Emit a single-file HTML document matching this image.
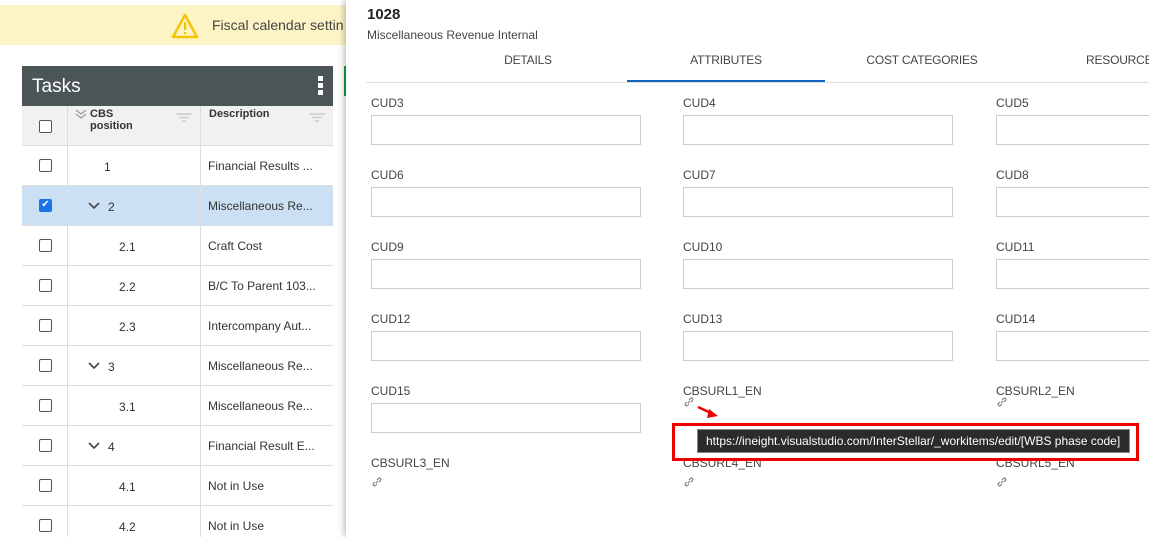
<!DOCTYPE html>
<html><head><meta charset="utf-8"><style>
*{box-sizing:border-box;margin:0;padding:0}
html,body{width:1149px;height:537px;overflow:hidden}
body{position:relative;background:#fff;font-family:"Liberation Sans",Roboto,sans-serif;color:#333}
.a{position:absolute}
.banner{left:0;top:5px;width:346px;height:40px;background:#fdf4c6}
.tb{left:22px;top:66px;width:311px;height:40px;background:#4b5556;color:#fff;font-size:19px;padding:10px 10px}
.hd{left:22px;top:106px;width:311px;height:40px;background:#f1f1f1;border-bottom:1px solid #ddd}
.row{left:22px;width:311px;height:40px;border-bottom:1px solid #ddd;font-size:12px}
.vl{position:absolute;top:0;bottom:0;width:1px;background:#ddd}
.cb{position:absolute;left:17px;top:13px;width:13px;height:13px;border:1.5px solid #555;border-radius:2px;background:#fff}
.drawer{left:346px;top:0;width:803px;height:537px;background:#fff;box-shadow:-2px 0 6px rgba(0,0,0,.25)}
.lbl{position:absolute;font-size:12px;color:#444}
.inp{position:absolute;width:270px;height:30px;border:1px solid #ccc}
.tab{position:absolute;top:53px;font-size:12px;color:#444;text-align:center;letter-spacing:-0.2px}
</style></head><body>
<div class="a banner"></div>
<svg class="a" style="left:171px;top:13px" width="28" height="26" viewBox="0 0 28 26"><path d="M14 2L26 24H2Z" fill="none" stroke="#f5c400" stroke-width="2.5" stroke-linejoin="round"/><rect x="13" y="9" width="2.2" height="8" fill="#f5c400"/><rect x="13" y="19" width="2.2" height="2.2" fill="#f5c400"/></svg>
<div class="a" style="left:212px;top:17px;font-size:14px;color:#444">Fiscal calendar settin</div>
<div class="a tb">Tasks</div>
<div class="a" style="left:318px;top:76px;width:5px;height:19px;background:linear-gradient(#fff 0 5px,transparent 5px 7px,#fff 7px 12px,transparent 12px 14px,#fff 14px)"></div>
<div class="a" style="left:344px;top:66px;width:3px;height:30px;background:#1aa14a"></div>
<div class="a hd"><div class="vl" style="left:45px"></div><div class="vl" style="left:178px"></div>
<div class="cb" style="top:14px"></div>
<svg class="a" style="left:53px;top:3px" width="12" height="10"><path d="M1 1L6 5L11 1M1 5L6 9L11 5" fill="none" stroke="#888" stroke-width="1"/></svg>
<div class="a" style="left:68px;top:2px;font-size:11px;font-weight:bold;line-height:12px;color:#333">CBS<br>position</div>
<div class="a" style="left:187px;top:2px;font-size:11px;font-weight:bold;color:#333">Description</div>
<svg class="a" style="left:154px;top:7px" width="16" height="9"><path d="M0 1H16M3 4.5H13M6 8H10" stroke="#ccc" stroke-width="1.5"/></svg>
<svg class="a" style="left:287px;top:7px" width="16" height="9"><path d="M0 1H16M3 4.5H13M6 8H10" stroke="#ccc" stroke-width="1.5"/></svg>
</div>
<div id="rows"></div>
<div class="a drawer"></div>
<div class="a" style="left:367px;top:6px;font-size:15px;font-weight:bold;color:#222">1028</div>
<div class="a" style="left:367px;top:28px;font-size:12px;color:#444">Miscellaneous Revenue Internal</div>
<div class="tab" style="left:468px;width:120px">DETAILS</div>
<div class="tab" style="left:627px;width:198px">ATTRIBUTES</div>
<div class="tab" style="left:822px;width:200px">COST CATEGORIES</div>
<div class="tab" style="left:1086px">RESOURCES</div>
<div class="a" style="left:366px;top:82px;width:783px;height:1px;background:#ddd"></div>
<div class="a" style="left:627px;top:80px;width:198px;height:2px;background:#1565c0"></div>
<div id="f"></div>
<div class="a" style="left:672px;top:423px;width:467px;height:38px;border:3px solid #e00"></div>
<div class="a" style="left:697px;top:429px;width:433px;height:24px;background:#2b2b2b;border:1px solid #888;color:#fff;font-size:12px;padding:4px 8px">https://ineight.visualstudio.com/InterStellar/_workitems/edit/[WBS phase code]</div>
<svg class="a" style="left:697px;top:405px" width="24" height="14"><path d="M1 2L16 9" stroke="#e00" stroke-width="2.5"/><path d="M12 4L21 11L10 13Z" fill="#e00"/></svg>
<script>
var chev='<svg class="a" style="left:66px;top:16px" width="12" height="8"><path d="M1 1L6 6L11 1" fill="none" stroke="#444" stroke-width="1.6"/></svg>';
var rows=[["1",0,"Financial Results ..."],["2",1,"Miscellaneous Re..."],["2.1",2,"Craft Cost"],["2.2",2,"B/C To Parent 103..."],["2.3",2,"Intercompany Aut..."],["3",1,"Miscellaneous Re..."],["3.1",2,"Miscellaneous Re..."],["4",1,"Financial Result E..."],["4.1",2,"Not in Use"],["4.2",2,"Not in Use"]];
var h="";rows.forEach(function(r,i){var sel=i==1;var t=146+i*40;
h+='<div class="a row" style="top:'+t+'px;'+(sel?'background:#cce0f3':'')+'"><div class="vl" style="left:45px"></div><div class="vl" style="left:178px"></div>'+
(sel?'<div class="cb" style="background:#1a73e8;border-color:#1a73e8;color:#fff;font-size:10px;line-height:10px;text-align:center">✔</div>':'<div class="cb"></div>')+
(r[1]==1?chev+'<div class="a" style="left:86px;top:14px">'+r[0]+'</div>':'<div class="a" style="left:'+(r[1]==0?82:97)+'px;top:14px">'+r[0]+'</div>')+
'<div class="a" style="left:186px;top:13px">'+r[2]+'</div></div>';});
document.getElementById("rows").innerHTML=h;
var link=function(x,y){return '<svg class="a" style="left:'+x+'px;top:'+y+'px" width="10" height="10"><path d="M4 6L6 4M3 5L1.5 6.5a1.4 1.4 0 0 0 2 2L5 7M5 3L6.5 1.5a1.4 1.4 0 0 1 2 2L7 5" fill="none" stroke="#777" stroke-width="1.1"/></svg>';};
var cols=[371,683,996],f="",n=3;
for(var r=0;r<5;r++)for(var c=0;c<3;c++){var y=96+r*72;
if(r<4){f+='<div class="lbl" style="left:'+cols[c]+'px;top:'+y+'px">CUD'+(n++)+'</div><div class="inp" style="left:'+cols[c]+'px;top:'+(y+19)+'px"></div>';}
else{if(c==0){f+='<div class="lbl" style="left:371px;top:'+y+'px">CUD15</div><div class="inp" style="left:371px;top:'+(y+19)+'px"></div>';}
else{f+='<div class="lbl" style="left:'+cols[c]+'px;top:'+y+'px">CBSURL'+c+'_EN</div>'+link(cols[c]+1,y+309-296);}}}
[[371,"CBSURL3_EN"],[683,"CBSURL4_EN"],[996,"CBSURL5_EN"]].forEach(function(a){f+='<div class="lbl" style="left:'+a[0]+'px;top:456px">'+a[1]+'</div>'+link(a[0]+1,477);});
document.getElementById("f").innerHTML=f;
</script>
</body></html>
